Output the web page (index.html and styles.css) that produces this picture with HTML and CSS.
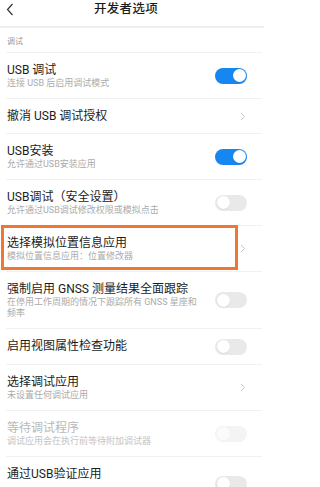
FILE: index.html
```html
<!DOCTYPE html>
<html lang="zh-CN">
<head>
<meta charset="utf-8">
<title>开发者选项</title>
<link rel="stylesheet" href="styles.css">
</head>
<body>
<div class="page">
<header class="topbar">
  <svg class="back" width="8" height="13" viewBox="0 0 8 13"><polyline points="6.5,1 1.5,6.5 6.5,12" fill="none" stroke="#333" stroke-width="1.2"/></svg>
  <h1 class="title">开发者选项</h1>
</header>
<div class="section">调试</div>
<ul class="list">
  <li class="row">
    <div class="text"><div class="t">USB 调试</div><div class="s">连接 USB 后启用调试模式</div></div>
    <span class="toggle on"></span>
  </li>
  <li class="row">
    <div class="text"><div class="t">撤消 USB 调试授权</div></div>
    <svg class="chev" width="6" height="9" viewBox="0 0 6 9"><polyline points="1,1 4.5,4.5 1,8" fill="none" stroke="#c8c8c8" stroke-width="1"/></svg>
  </li>
  <li class="row">
    <div class="text"><div class="t">USB安装</div><div class="s">允许通过USB安装应用</div></div>
    <span class="toggle on"></span>
  </li>
  <li class="row">
    <div class="text"><div class="t">USB调试（安全设置）</div><div class="s">允许通过USB调试修改权限或模拟点击</div></div>
    <span class="toggle"></span>
  </li>
  <li class="row">
    <div class="text"><div class="t">选择模拟位置信息应用</div><div class="s">模拟位置信息应用：位置修改器</div></div>
    <svg class="chev" width="6" height="9" viewBox="0 0 6 9"><polyline points="1,1 4.5,4.5 1,8" fill="none" stroke="#c8c8c8" stroke-width="1"/></svg>
    <span class="highlight"></span>
  </li>
  <li class="row">
    <div class="text"><div class="t">强制启用 GNSS 测量结果全面跟踪</div><div class="s">在停用工作周期的情况下跟踪所有 GNSS 星座和频率</div></div>
    <span class="toggle"></span>
  </li>
  <li class="row">
    <div class="text"><div class="t">启用视图属性检查功能</div></div>
    <span class="toggle"></span>
  </li>
  <li class="row">
    <div class="text"><div class="t">选择调试应用</div><div class="s">未设置任何调试应用</div></div>
    <svg class="chev" width="6" height="9" viewBox="0 0 6 9"><polyline points="1,1 4.5,4.5 1,8" fill="none" stroke="#c8c8c8" stroke-width="1"/></svg>
  </li>
  <li class="row disabled">
    <div class="text"><div class="t">等待调试程序</div><div class="s">调试应用会在执行前等待附加调试器</div></div>
    <span class="toggle off-dis"></span>
  </li>
  <li class="row last">
    <div class="text"><div class="t">通过USB验证应用</div></div>
    <span class="toggle"></span>
  </li>
</ul>
</div>
</body>
</html>
```

FILE: styles.css
```css
html, body {
  margin: 0;
  padding: 0;
  background: #fff;
  overflow: hidden;
}

.page {
  width: 264px;
  height: 487px;
  overflow: hidden;
  font-family: "Roboto", "Noto Sans CJK SC", sans-serif;
  color: #1c1c1c;
}

.topbar {
  display: flex;
  align-items: center;
  height: 18px;
  padding: 0 0 8px 0;
  border-bottom: 2px solid #eeeeee;
}

.back {
  display: block;
  margin-left: 6px;
}

.title {
  margin: 0 0 0 80px;
  font-size: 12.5px;
  font-weight: 500;
  line-height: 18px;
  letter-spacing: 0.3px;
  color: #1a1a1a;
}

.section {
  margin: 0 2px 0 6px;
  padding: 8px 0 4px 1px;
  font-size: 8px;
  line-height: 12px;
  color: #9a9a9a;
  border-bottom: 1px solid #f0f0f0;
}

.list {
  list-style: none;
  margin: 0 2px 0 6px;
  padding: 0;
}

.row {
  display: flex;
  align-items: center;
  justify-content: space-between;
  padding: 9.5px 15px 9.5px 1px;
  border-bottom: 1px solid #f0f0f0;
  position: relative;
}

.row.last {
  align-items: flex-start;
}

.row.last .toggle {
  margin-top: 9px;
}

.text {
  max-width: 198px;
}

.t {
  font-size: 12px;
  line-height: 15px;
  color: #1c1c1c;
}

.s {
  font-size: 9px;
  line-height: 11px;
  color: #ababab;
}

.disabled .t { color: #b8b8b8; }
.disabled .s { color: #c4c4c4; }

.chev {
  display: block;
  margin-right: 1px;
}

.toggle {
  position: relative;
  flex: none;
  width: 32px;
  height: 16px;
  border-radius: 8px;
  background: #e9e9e9;
}

.toggle::after {
  content: "";
  position: absolute;
  top: 1.5px;
  left: 1.5px;
  width: 13px;
  height: 13px;
  border-radius: 50%;
  background: #fff;
  box-shadow: 0 0.5px 1px rgba(0,0,0,0.12);
}

.toggle.on {
  background: #1686f0;
}

.toggle.on::after {
  left: auto;
  right: 1.5px;
}

.toggle.off-dis {
  background: #f4f4f4;
}

.toggle.off-dis::after {
  background: #fbfbfb;
  box-shadow: none;
}

.highlight {
  position: absolute;
  left: -5px;
  top: -1px;
  width: 231px;
  height: 39px;
  border: 3.5px solid #f07634;
  pointer-events: none;
}
```
